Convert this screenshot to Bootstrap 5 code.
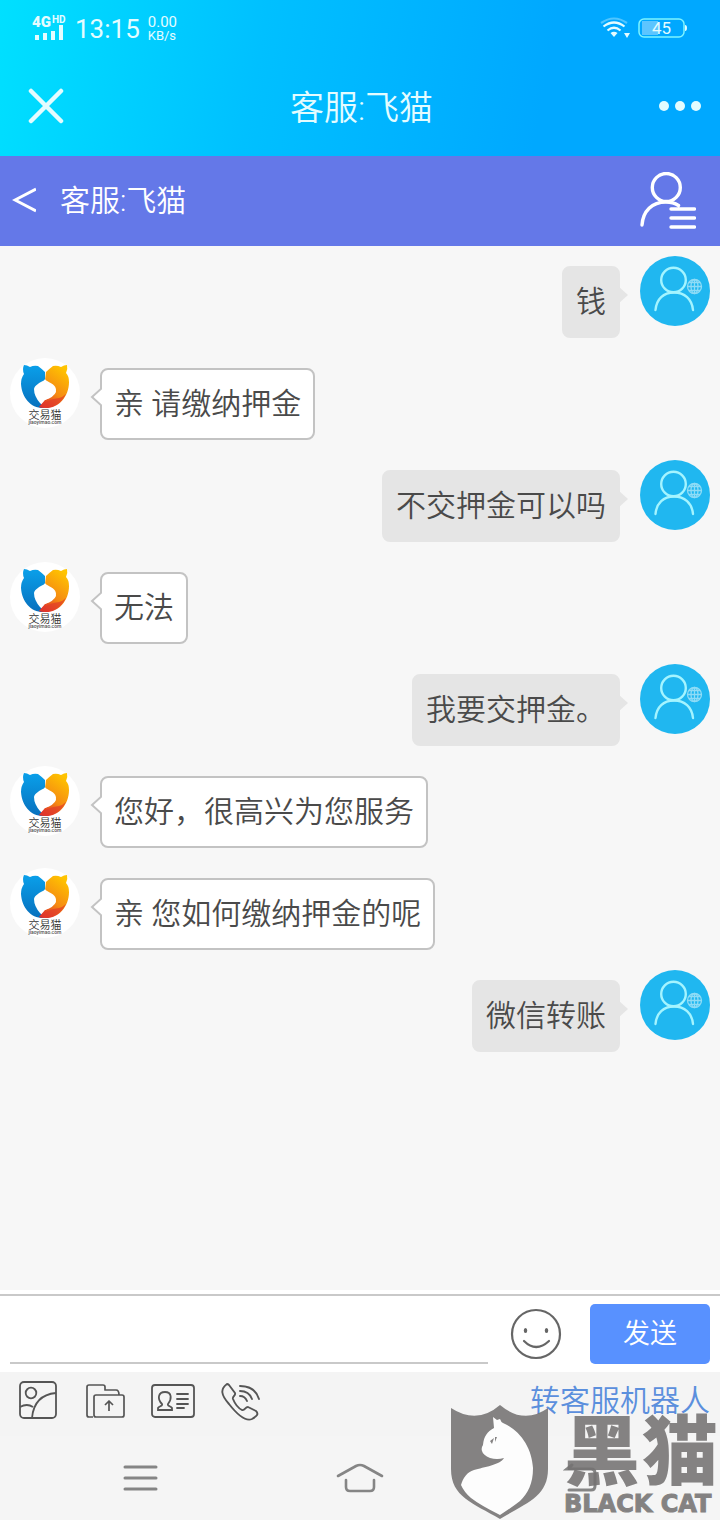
<!DOCTYPE html>
<html lang="zh-CN">
<head>
<meta charset="utf-8">
<meta name="viewport" content="width=device-width, initial-scale=1">
<title>客服:飞猫</title>
<link href="https://cdn.jsdelivr.net/npm/bootstrap@5.3.0/dist/css/bootstrap.min.css" rel="stylesheet">
<style>
body{font-family:Roboto,"Noto Sans CJK SC",sans-serif;font-weight:350;background:#f5f5f5;color:#4a4a4a}
svg{display:block;flex:none}
.app-head{background:linear-gradient(100deg,#00e0ff,#00c0ff 36%,#00a8ff 75%);color:#e4fcff}
.status-bar{height:56px;padding:0 32px}
.clock{font-size:26px;line-height:32px;font-weight:400;padding-top:2px}
.net-rate{font-size:15px;line-height:13px;font-weight:400;padding-top:2px}
.net-unit{font-size:13px}
.title-bar{height:100px;padding:0 19px 0 28px}
.title-bar h1{font-size:34px;line-height:40px;font-weight:350}
.sub-bar{height:90px;background:#6478e8;color:#fff;padding:0 24px 0 12px}
.sub-bar h2{font-size:30px;line-height:36px;font-weight:350}
.plain-btn{background:none;border:0;padding:0;color:inherit}
.chat{background:#f7f7f7;padding:10px;gap:20px}
.msg{gap:20px}
.bubble{position:relative;margin-top:10px;padding:12px;border:2px solid #c3c3c3;border-radius:8px;background:#fff;font-size:30px;line-height:44px}
.mine .bubble{background:#e5e5e5;border-color:#e5e5e5}
.tail{position:absolute;top:16px;left:-12px}
.mine .tail{left:auto;right:-12px}
.composer{background:#fff;border-top:2px solid #c9c9c9;padding:8px 10px;gap:22px}
.chat-wrap{border-bottom:4px solid #fff}
.msg-input{height:60px;border:0;border-bottom:2px solid #c9c9c9;border-radius:0;font-size:30px;padding:0}
.msg-input:focus{box-shadow:none}
.send-btn{width:120px;height:60px;margin-left:6px;background:#5891ff;color:#fff;font-size:27px;font-weight:350;border:0;border-radius:5px}
.tools{height:64px;padding:0 10px 6px 18px;background:#f4f4f4;color:#555}
.tool-set{gap:25px}
.robot-link{font-size:30px;line-height:36px;color:#5b8fdd}
.sys-nav{height:84px;color:#858585;padding:0 120px}
.brand-mark{position:absolute;right:0;bottom:0;color:#747272;opacity:.87}
</style>
</head>
<body>
<svg width="0" height="0" class="position-absolute" aria-hidden="true">
  <defs>
    <linearGradient id="blueFur" x1="0" y1="0" x2="0" y2="1"><stop offset="0" stop-color="#0aa0ea"/><stop offset="1" stop-color="#0870bd"/></linearGradient>
    <linearGradient id="goldFur" x1="0.7" y1="0" x2="0.2" y2="1"><stop offset="0" stop-color="#ffc400"/><stop offset=".6" stop-color="#f58a13"/><stop offset="1" stop-color="#dc2630"/></linearGradient>
  </defs>
</svg>

<div class="d-flex flex-column min-vh-100 position-relative">
  <header class="app-head">
    <div class="status-bar d-flex align-items-center justify-content-between">
      <div class="d-flex align-items-center gap-2">
        <svg width="35" height="28" viewBox="0 0 35 28" fill="currentColor"><text x="0" y="13" font-size="15" font-weight="900">4G</text><text x="20" y="9" font-size="10" font-weight="700">HD</text><path d="M3 21h4v5H3zM11 19h4v7h-4zM19 17h4v9h-4zM27 11h4v15h-4z"/></svg>
        <span class="clock">13:15</span>
        <span class="net-rate">0.00<br><span class="net-unit">KB/s</span></span>
      </div>
      <div class="d-flex align-items-center gap-2">
        <svg width="30" height="22" viewBox="0 0 30 22" fill="none" stroke="currentColor" stroke-width="2.200"><path d="M1 6q13-9 26 0" opacity=".35"/><path d="M3.500 9.500q10.500-8 21 0M7.500 13.500q6.500-5.500 13 0"/><path d="M10.500 16q3.500-2.500 7 0L14 20z" fill="currentColor" stroke="none"/><path d="M24 16h6l-3 5z" fill="currentColor" stroke="none"/></svg>
        <svg width="50" height="20" viewBox="0 0 50 20"><path d="M4 3h16v14H4z" fill="#5cc5ff"/><rect x="1" y="1" width="45" height="18" rx="5" fill="none" stroke="#7df3ff" stroke-width="1.500"/><path d="M47 7q2 0 2 3t-2 3z" fill="currentColor"/><text x="23.500" y="16" text-anchor="middle" font-size="17" font-weight="400" fill="currentColor">45</text></svg>
      </div>
    </div>
    <div class="title-bar d-flex align-items-center justify-content-between">
      <button class="plain-btn" type="button" aria-label="关闭"><svg width="36" height="36" viewBox="0 0 36 36" stroke="currentColor" stroke-width="4.500" stroke-linecap="round"><path d="M3 3l30 30M33 3L3 33"/></svg></button>
      <h1 class="m-0 pt-1">客服:飞猫</h1>
      <button class="plain-btn" type="button" aria-label="更多"><svg width="42" height="12" viewBox="0 0 42 12" fill="currentColor"><circle cx="5" cy="6" r="5"/><circle cx="21" cy="6" r="5"/><circle cx="37" cy="6" r="5"/></svg></button>
    </div>
  </header>

  <div class="sub-bar d-flex align-items-center">
    <button class="plain-btn me-4" type="button" aria-label="返回"><svg width="24" height="28" viewBox="0 0 24 28" fill="none" stroke="currentColor" stroke-width="3"><path d="M24 2L3 13l21 11"/></svg></button>
    <h2 class="m-0 me-auto">客服:飞猫</h2>
    <button class="plain-btn" type="button" aria-label="用户资料"><svg width="56" height="58" viewBox="0 0 56 58" fill="none" stroke="currentColor" stroke-width="3.400" stroke-linecap="round"><circle cx="26.300" cy="15.500" r="14"/><path d="M2 53C3 39 12 30 26 30q7 0 12.500 3.500M31 37h23.500M31 46h23.500M31 55h23.500"/></svg></button>
  </div>

  <main class="chat-wrap flex-grow-1 d-flex flex-column">
    <div class="chat flex-grow-1 d-flex flex-column" id="chat"></div>
  </main>

  <form class="composer d-flex align-items-center" onsubmit="return false">
    <input class="msg-input form-control flex-grow-1" type="text" aria-label="消息">
    <button class="plain-btn" type="button" aria-label="表情"><svg width="52" height="52" viewBox="0 0 52 52" fill="none" stroke="#666" stroke-width="2.200" stroke-linecap="round"><circle cx="26" cy="26" r="24"/><path d="M14 33q12 12 25 0"/><ellipse cx="15.500" cy="22.500" rx="1" ry="1.800" fill="#666" stroke-width="1.500"/><ellipse cx="36.500" cy="22.500" rx="1" ry="1.800" fill="#666" stroke-width="1.500"/></svg></button>
    <button class="send-btn btn flex-shrink-0" type="submit">发送</button>
  </form>

  <div class="tools d-flex align-items-center">
    <div class="tool-set d-flex align-items-center me-auto">
      <button class="plain-btn" type="button" aria-label="图片"><svg width="40" height="40" viewBox="0 0 40 40" fill="none" stroke="currentColor" stroke-width="1.800"><rect x="2" y="1" width="36" height="36" rx="4"/><circle cx="13" cy="12" r="5.300"/><path d="M2 26q7-4 13 0M14 37q2-23 24-25"/></svg></button>
      <button class="plain-btn" type="button" aria-label="文件"><svg width="42" height="40" viewBox="0 0 42 40" fill="none" stroke="currentColor" stroke-width="1.700" stroke-linejoin="round"><path d="M10 36H6q-2 0-2-2V6q0-2 2-2h14q2 0 2 2v3h11q3 0 3 5"/><rect x="11" y="14" width="30" height="22" rx="2"/><path d="M26 30V20m-4 4l4-4 4 4"/></svg></button>
      <button class="plain-btn" type="button" aria-label="名片"><svg width="46" height="40" viewBox="0 0 46 40" fill="none" stroke="currentColor" stroke-width="1.800" stroke-linecap="round"><rect x="2" y="4" width="42" height="32" rx="3"/><path d="M27 13h11M27 18h11M27 23h11M27 27h7M12 23c-5-5-4-12 3-12c7 0 7 7 3 12c-1 2 3 2 4 4v2H8v-2c1-2 5-2 4-4z"/></svg></button>
      <button class="plain-btn" type="button" aria-label="电话"><svg width="40" height="40" viewBox="0 0 40 40" fill="none" stroke="currentColor" stroke-width="1.900" stroke-linecap="round" stroke-linejoin="round"><path d="M6 3c-7 5-6 11 2 20c7 9 16 18 23 15c5-3 7-5 4-8l-8-4c-3 0-3 4-6 3c-4-2-7-6-9-11c-1-3 3-3 2-6L8 4q-1-1-2-1z"/><path d="M19 5q15 0 19 13M19 10q9 0 12 8M19 15q5 0 7 5"/></svg></button>
    </div>
    <a class="robot-link text-decoration-none" href="#">转客服机器人</a>
  </div>

  <nav class="sys-nav d-flex align-items-center justify-content-between" aria-label="系统导航">
    <button class="plain-btn" type="button" aria-label="菜单"><svg width="40" height="30" viewBox="0 0 40 30" stroke="currentColor" stroke-width="3" stroke-linecap="round"><path d="M5 4h31M5 15h31M5 26h31"/></svg></button>
    <button class="plain-btn" type="button" aria-label="主页"><svg width="48" height="32" viewBox="0 0 48 32" fill="none" stroke="currentColor" stroke-width="2.600" stroke-linecap="round"><path d="M2 14L20 4q4-2 8 0l18 10M10 18v7q0 4 4 4h20q4 0 4-4v-7"/></svg></button>
    <button class="plain-btn" type="button" aria-label="返回"><svg width="40" height="32" viewBox="0 0 40 32" fill="none" stroke="currentColor" stroke-width="3" stroke-linecap="round"><path d="M12 3l-5 4h24q4 0 4 4v13q0 4-4 4H9"/></svg></button>
  </nav>

  <svg class="brand-mark pe-none" width="270" height="118" viewBox="0 0 270 118" fill="currentColor">
    <path d="M1 6q26 17 49-3q24 20 48 3v61c0 28-22 34-48 50C23 101 1 95 1 67z"/>
    <path d="M43 15l4 3l3-1q1 3 3 4C70 28 82 46 83 66C83 82 78 91 70 99Q61 106 50 113Q30 103 21 96Q14 90 11 83C13 76 17 70 24 68C34 65 50 63 54 56Q47 58 40 56Q33 53 32 49Q31 46 33 43C34 34 37 30 44 26z" fill="#fff"/>
    <path d="M40 39l4-3-2 6zM45 35l2 0-2 5z"/>
    <text x="114 192" y="77" font-size="76" font-weight="900" font-family="'Noto Sans CJK SC',sans-serif">黑猫</text>
    <text x="114" y="110" font-size="24" font-weight="700" font-family="'DejaVu Sans',sans-serif" stroke="currentColor" stroke-width="1">BLACK CAT</text>
  </svg>
</div>

<script src="https://cdn.jsdelivr.net/npm/bootstrap@5.3.0/dist/js/bootstrap.bundle.min.js"></script>
<script>
const catLogo=`<svg width="70" height="70" viewBox="0 0 70 70" role="img" aria-label="客服">
  <circle cx="35" cy="35" r="35" fill="#fff"/>
  <path d="M14 7q3 0 6 2q4-2 8-1q4 3 7 6v8C29 25 25 27 24 31Q24 38 30 45L35 50C21 51 12 40 11 26Q11 20 14 16Q12 11 14 7z" fill="url(#blueFur)"/>
  <path d="M57 7q-3 0-6 2q-4-2-8-1q-4 3-7 6l-1 8C41 25 46 27 46 32Q45 37 35 42L29 49C45 54 59 41 59 24Q59 18 56 15Q58 11 57 7z" fill="url(#goldFur)"/>
  <path d="M29 49q6-7 20-9q4-1 7-4C50 48 39 52 29 49z" fill="#e13c2a" opacity=".7"/>
  <path d="M35 21q2 4 6 6q5 3 5 7q-2 5-11 8q-9-4-10-11q1-3 5-5q4-2 5-5z" fill="#fff"/>
  <text x="35" y="61" text-anchor="middle" font-size="11" fill="#333">交易猫</text>
  <text x="35" y="66" text-anchor="middle" font-size="5" font-weight="500" fill="#555">jiaoyimao.com</text>
</svg>`;
const userLogo=`<svg width="70" height="70" viewBox="0 0 70 70" role="img" aria-label="我">
  <circle cx="35" cy="35" r="35" fill="#20b7f0"/>
  <g fill="none" stroke="#a4f4ff" stroke-width="2.400" stroke-linecap="round"><circle cx="33.500" cy="24" r="12.300"/><path d="M15.500 54c1-11 8-17.500 18.500-17.500S52 43 53 54"/></g>
  <g fill="none" stroke="#8fdcf6" stroke-width="1.300"><circle cx="54.500" cy="30.500" r="7"/><ellipse cx="54.500" cy="30.500" rx="3.500" ry="7"/><path d="M54.500 23.500v14M47.500 30.500h14M49 26.500h11M49 34.500h11"/></g>
</svg>`;
const tailLeft='<path d="M12 2L2 11l10 9" fill="#fff" stroke="#c3c3c3" stroke-width="2"/>';
const tailRight='<path d="M0 2l10 9L0 20z" fill="#e5e5e5"/>';
const messages=[
  [1,'钱'],[0,'亲 请缴纳押金'],[1,'不交押金可以吗'],[0,'无法'],
  [1,'我要交押金。'],[0,'您好，很高兴为您服务'],[0,'亲 您如何缴纳押金的呢'],[1,'微信转账']
];
document.getElementById('chat').innerHTML=messages.map(([mine,text])=>`
  <div class="msg d-flex align-items-start ${mine?'mine flex-row-reverse':''}">
    ${mine?userLogo:catLogo}
    <div class="bubble">${text}<svg class="tail" width="12" height="22">${mine?tailRight:tailLeft}</svg></div>
  </div>`).join('');
</script>
</body>
</html>
